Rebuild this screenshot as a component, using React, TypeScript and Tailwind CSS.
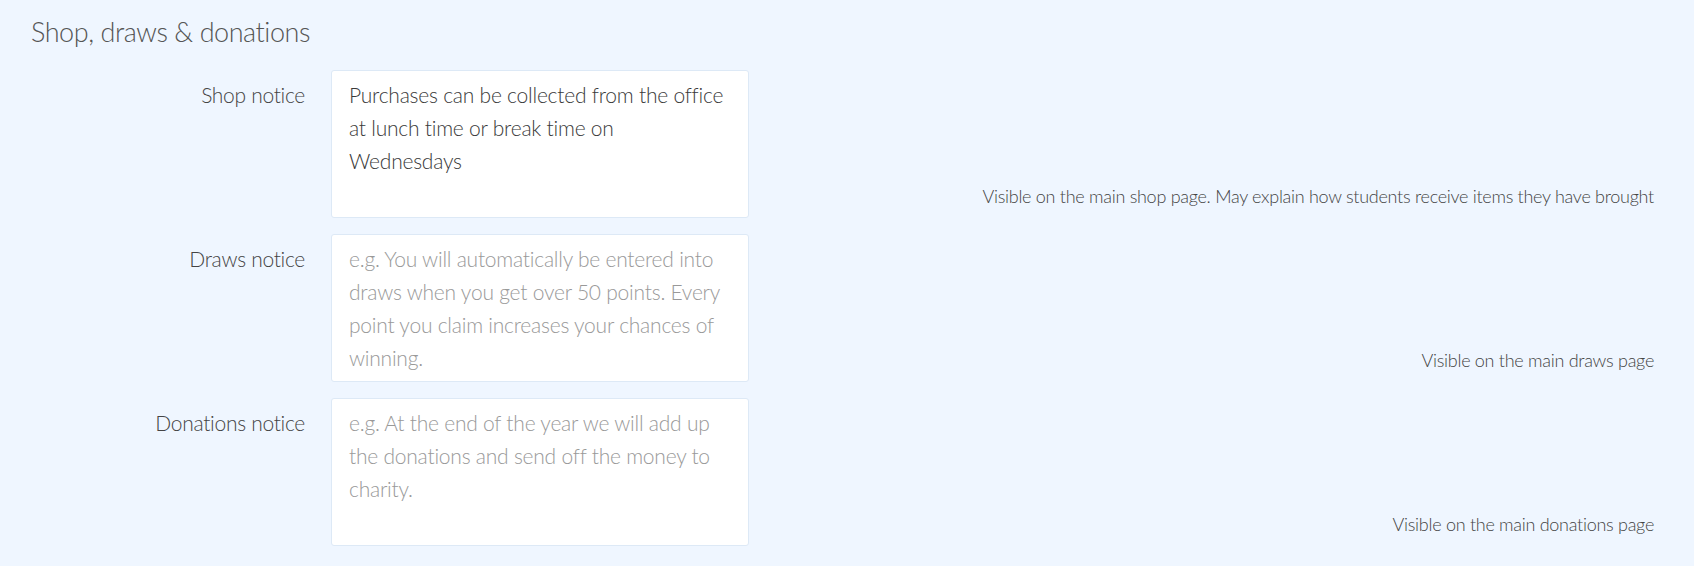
import React from "react";

const rows = [
  {
    label: "Shop notice",
    value: "Purchases can be collected from the office at lunch time or break time on Wednesdays",
    placeholder: "",
    help: "Visible on the main shop page. May explain how students receive items they have brought",
  },
  {
    label: "Draws notice",
    value: "",
    placeholder:
      "e.g. You will automatically be entered into draws when you get over 50 points. Every point you claim increases your chances of winning.",
    help: "Visible on the main draws page",
  },
  {
    label: "Donations notice",
    value: "",
    placeholder: "e.g. At the end of the year we will add up the donations and send off the money to charity.",
    help: "Visible on the main donations page",
  },
];

export default function App() {
  return (
    <div className="min-h-[566px] bg-[#eff6ff] pl-[31px] pr-[40px] pt-[15px] text-[#555] [font-family:Lato,'Noto_Sans',sans-serif]">
      <h2 className="text-[27px] font-light leading-[34px] tracking-[-0.45px] text-[#555]">
        Shop, draws &amp; donations
      </h2>
      <div className="mt-[21px] flex flex-col gap-[16px]">
        {rows.map((r) => (
          <div key={r.label} className="flex">
            <label className="w-[300px] shrink-0 pr-[26px] pt-[8px] text-right text-[21px] font-light leading-[33px] tracking-[-0.3px] text-[#444]">
              {r.label}
            </label>
            <textarea
              className="h-[148px] w-[418px] shrink-0 resize-none rounded-[3px] border border-[#dde9f6] bg-white px-[17px] py-[7px] text-[21px] font-light leading-[33px] tracking-[-0.23px] text-[#3a3a3a] outline-none placeholder:text-[#999]"
              defaultValue={r.value}
              placeholder={r.placeholder}
            />
            <div className="flex-1 self-end pb-[8px] text-right text-[18px] font-light leading-[27px] tracking-[-0.28px] text-[#444]">
              {r.help}
            </div>
          </div>
        ))}
      </div>
    </div>
  );
}
